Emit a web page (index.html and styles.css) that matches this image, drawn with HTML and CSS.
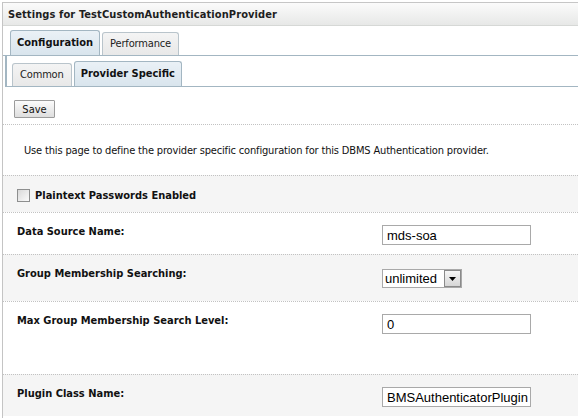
FILE: index.html
```html
<!DOCTYPE html>
<html>
<head>
<meta charset="utf-8">
<link rel="stylesheet" href="styles.css">
</head>
<body>
<div class="page">
  <div class="header">Settings for TestCustomAuthenticationProvider</div>
  <div class="tabs tabs-main">
    <div class="tab tab-active">Configuration</div>
    <div class="tab tab-wide">Performance</div>
  </div>
  <div class="tabs tabs-sub">
    <div class="tab tab-wide">Common</div>
    <div class="tab tab-active">Provider Specific</div>
  </div>
  <div class="toolbar">
    <button class="btn">Save</button>
  </div>
  <div class="intro">Use this page to define the provider specific configuration for this DBMS Authentication provider.</div>
  <div class="row row-alt row-check">
    <input type="checkbox" class="check">
    <span class="label">Plaintext Passwords Enabled</span>
  </div>
  <div class="row row-field">
    <div class="label">Data Source Name:</div>
    <input class="text" type="text" value="mds-soa">
  </div>
  <div class="row row-alt row-field row-select">
    <div class="label">Group Membership Searching:</div>
    <div class="select"><span class="select-value">unlimited</span><span class="select-btn"><svg width="7" height="4" viewBox="0 0 7 4"><path d="M0 0H7L3.5 4Z" fill="#000"/></svg></span></div>
  </div>
  <div class="row row-field row-tall">
    <div class="label">Max Group Membership Search Level:</div>
    <input class="text" type="text" value="0">
  </div>
  <div class="row row-alt row-field">
    <div class="label">Plugin Class Name:</div>
    <input class="text" type="text" value="BMSAuthenticatorPlugin">
  </div>
</div>
</body>
</html>
```
FILE: styles.css
```css
html, body {
  margin: 0;
  padding: 0;
  background: #ffffff;
}
body {
  font-family: "DejaVu Sans Condensed", "DejaVu Sans", sans-serif;
  font-stretch: condensed;
  font-size: 11px;
  letter-spacing: -0.16px;
  color: #000;
  width: 578px;
  height: 418px;
  overflow: hidden;
}
.page {
  margin: 2px 0 0 2px;
  border-left: 1px solid #c4c4c4;
  min-height: 420px;
}
.header {
  height: 22px;
  line-height: 23px;
  border-top: 1px solid #c6c6c6;
  border-bottom: 1px solid #d6d8d6;
  background: linear-gradient(#fbfbfb, #e7e8e7);
  padding-left: 5px;
  font-weight: bold;
  letter-spacing: 0.1px;
  color: #1e1e1e;
  white-space: nowrap;
}
.tabs {
  display: flex;
  align-items: flex-end;
  gap: 2px;
  border-bottom: 1px solid #a3b6c2;
}
.tabs-main {
  height: 25px;
  padding: 4px 0 0 7px;
}
.tabs-sub {
  height: 26px;
  margin-left: 2px;
  border-left: 2px solid #a3b6c2;
  padding: 4px 0 0 5px;
}
.tab {
  box-sizing: border-box;
  height: 23px;
  line-height: 21px;
  padding: 0 6px;
  border: 1px solid #b9c4cb;
  border-bottom: none;
  border-radius: 3px 3px 0 0;
  background: linear-gradient(#f4f4f4, #e8e8e8);
  color: #222;
  white-space: nowrap;
}
.tab-wide {
  padding: 0 7px;
}
.tab-active {
  height: 25px;
  line-height: 24px;
  font-weight: bold;
  letter-spacing: 0;
  border-color: #a3b6c2;
  background: linear-gradient(#eaf1f6, #d9e5ed);
  color: #111;
}
.toolbar {
  padding: 13px 0 0 11px;
  height: 24px;
  border-bottom: 1px dotted #c2c2c2;
}
.btn {
  box-sizing: border-box;
  width: 41px;
  height: 18px;
  padding: 0;
  margin: 0;
  font: inherit;
  font-stretch: condensed;
  letter-spacing: 0;
  color: #111;
  border: 1px solid #9b9b9b;
  border-radius: 1px;
  background: linear-gradient(#fbfbfb, #dedede);
  display: block;
}
.intro {
  height: 50px;
  line-height: 52px;
  padding-left: 21px;
  white-space: nowrap;
  color: #111;
}
.row {
  border-top: 1px dotted #c2c2c2;
  box-sizing: border-box;
}
.row-alt {
  background: #f5f5f5;
}
.row-check {
  display: flex;
  align-items: center;
  gap: 5px;
  height: 37px;
  padding: 2px 0 0 14px;
}
.check {
  appearance: none;
  -webkit-appearance: none;
  box-sizing: border-box;
  width: 13px;
  height: 13px;
  margin: 0;
  border: 1px solid #8e8f8f;
  background: linear-gradient(135deg, #d9d9d9, #fbfbfb);
}
.label {
  font-weight: bold;
  letter-spacing: 0;
  color: #111;
  white-space: nowrap;
}
.row-field {
  display: grid;
  grid-template-columns: 365px 1fr;
  align-items: start;
  height: 42px;
  padding: 12px 0 0 14px;
}
.row-field .label {
  line-height: 13px;
}
.row-select {
  height: 47px;
  padding-top: 12px;
}
.row-tall {
  height: 73px;
}
.text {
  box-sizing: border-box;
  width: 149px;
  height: 20px;
  margin: 0;
  padding: 0 0 0 4px;
  border: 1px solid #a9a9a9;
  background: #fff;
  font-family: "Liberation Sans", Arial, sans-serif;
  font-size: 13px;
  letter-spacing: 0;
  color: #000;
  outline: none;
}
.select {
  box-sizing: border-box;
  display: flex;
  width: 80px;
  height: 19px;
  margin-top: 2px;
  border: 1px solid #a9a9a9;
  background: #fff;
  font-family: "Liberation Sans", Arial, sans-serif;
  font-size: 13px;
  letter-spacing: 0;
  line-height: 17px;
}
.select-value {
  flex: 1;
  padding-left: 2px;
}
.select-btn {
  box-sizing: border-box;
  width: 17px;
  height: 17px;
  border: 1px solid #8a8a8a;
  background: linear-gradient(#f6f6f6, #d6d6d6);
  display: flex;
  align-items: center;
  justify-content: center;
}
```
